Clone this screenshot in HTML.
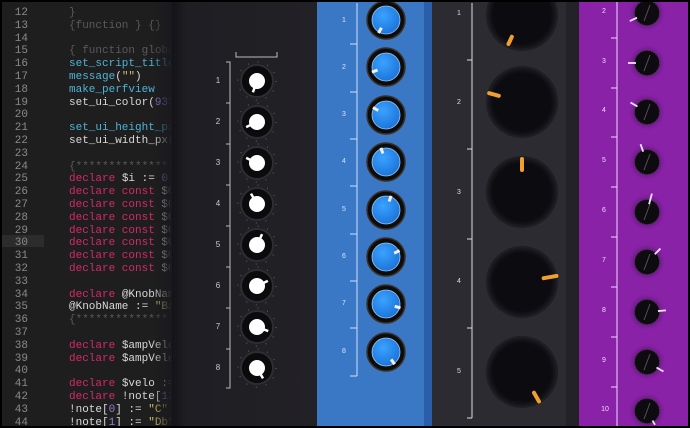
<!DOCTYPE html>
<html><head><meta charset="utf-8"><style>
html,body{margin:0;padding:0;background:#000;}
#w{position:relative;width:690px;height:428px;overflow:hidden;background:#000;}
#code{position:absolute;left:2px;top:2px;width:172px;height:424px;background:#1e1e1f;overflow:hidden;}
.ln{position:absolute;left:0;width:40px;font:11px/12.8px "Liberation Mono",monospace;color:#8a8a8a;}
.cl{position:absolute;left:67px;font:11px/12.8px "Liberation Mono",monospace;color:#d8d8d8;white-space:pre;}
.f{color:#4fb3d6}.k{color:#d6286a}.c{color:#5a5a5a}.n{color:#9b7ad8}.s{color:#d0c070}
#fade{position:absolute;left:150px;top:0;width:22px;height:424px;background:linear-gradient(to right,rgba(30,30,31,0),#1a191d 90%);}
svg{position:absolute;left:0;top:0;}
</style></head><body><div id="w">
<div id="code">
<div style="position:absolute;left:0;top:233px;width:42px;height:12px;background:#2c2c2e"></div>
<div class="ln" style="top:5px;text-align:right;width:26px">12<br>13<br>14<br>15<br>16<br>17<br>18<br>19<br>20<br>21<br>22<br>23<br>24<br>25<br>26<br>27<br>28<br>29<br>30<br>31<br>32<br>33<br>34<br>35<br>36<br>37<br>38<br>39<br>40<br>41<br>42<br>43<br>44</div>
<div class="cl" style="top:5px"><span class="c">}
{function } {}</span>

<span class="c">{ function globa</span>
<span class="f">set_script_title(</span>
<span class="f">message</span>(<span class="s">""</span>)
<span class="f">make_perfview</span>
set_ui_color(<span class="n">9333</span>

<span class="f">set_ui_height_px(</span>
set_ui_width_px(<span class="n">6</span>

<span class="c">{****************</span>
<span class="k">declare</span> $i := <span class="n">0</span>
<span class="k">declare const</span> $GU
<span class="k">declare const</span> $GU
<span class="k">declare const</span> $GU
<span class="k">declare const</span> $GU
<span class="k">declare const</span> $GU
<span class="k">declare const</span> $GU
<span class="k">declare const</span> $GU

<span class="k">declare</span> @KnobName
@KnobName := <span class="s">"Bas</span>
<span class="c">{****************</span>

<span class="k">declare</span> $ampVeloI
<span class="k">declare</span> $ampVeloO

<span class="k">declare</span> $velo :=
<span class="k">declare</span> !note[<span class="n">12</span>]
!note[<span class="n">0</span>] := <span class="s">"C"</span>
!note[<span class="n">1</span>] := <span class="s">"Db"</span></div>
<div id="fade"></div>
</div>
<svg width="690" height="428" viewBox="0 0 690 428" font-family="Liberation Sans, sans-serif">
<defs>
<radialGradient id="bl" cx="0.4" cy="0.35" r="0.7"><stop offset="0" stop-color="#3aa2ff"/><stop offset="1" stop-color="#1a72d8"/></radialGradient>
<radialGradient id="gk" cx="0.5" cy="0.5" r="0.5"><stop offset="0.85" stop-color="#0c0b0f"/><stop offset="1" stop-color="#1a191e"/></radialGradient>
<radialGradient id="pg" cx="0.5" cy="0.5" r="0.5"><stop offset="0.55" stop-color="#5e1676"/><stop offset="1" stop-color="#8a22a8" stop-opacity="0"/></radialGradient>
<linearGradient id="p1" x1="0" x2="1"><stop offset="0" stop-color="#141317"/><stop offset="0.1" stop-color="#1f1e23"/><stop offset="1" stop-color="#222126"/></linearGradient>
</defs>
<rect x="172" y="2" width="145" height="424" fill="url(#p1)"/>
<path d="M236 52 V57 H277 V52" stroke="#bbb" fill="none" stroke-width="1"/>
<path d="M226 62 H230 V388 H226" stroke="#bbb" fill="none"/>
<g stroke="#bbb"><line x1="226" y1="103" x2="230" y2="103"/><line x1="226" y1="144" x2="230" y2="144"/><line x1="226" y1="185" x2="230" y2="185"/><line x1="226" y1="226" x2="230" y2="226"/><line x1="226" y1="267" x2="230" y2="267"/><line x1="226" y1="308" x2="230" y2="308"/><line x1="226" y1="349" x2="230" y2="349"/></g>
<g fill="#ccc" font-size="8" text-anchor="middle"><text x="218" y="83">1</text><text x="218" y="124">2</text><text x="218" y="165">3</text><text x="218" y="206">4</text><text x="218" y="247">5</text><text x="218" y="288">6</text><text x="218" y="329">7</text><text x="218" y="370">8</text></g>
<g>
<g transform="translate(257,81)"><circle r="19" fill="none" stroke="#666" stroke-width="1" stroke-dasharray="1 9"/><circle r="16" fill="#0b0b0d" stroke="#2e2e32" stroke-width="2"/><circle r="8" fill="#fff"/><g transform="rotate(200)"><line y1="-5" y2="-12" stroke="#fff" stroke-width="2.5"/></g></g>
<g transform="translate(257,122)"><circle r="19" fill="none" stroke="#666" stroke-dasharray="1 9"/><circle r="16" fill="#0b0b0d" stroke="#2e2e32" stroke-width="2"/><circle r="8" fill="#fff"/><g transform="rotate(245)"><line y1="-5" y2="-12" stroke="#fff" stroke-width="2.5"/></g></g>
<g transform="translate(257,163)"><circle r="19" fill="none" stroke="#666" stroke-dasharray="1 9"/><circle r="16" fill="#0b0b0d" stroke="#2e2e32" stroke-width="2"/><circle r="8" fill="#fff"/><g transform="rotate(295)"><line y1="-5" y2="-12" stroke="#fff" stroke-width="2.5"/></g></g>
<g transform="translate(257,204)"><circle r="19" fill="none" stroke="#666" stroke-dasharray="1 9"/><circle r="16" fill="#0b0b0d" stroke="#2e2e32" stroke-width="2"/><circle r="8" fill="#fff"/><g transform="rotate(330)"><line y1="-5" y2="-12" stroke="#fff" stroke-width="2.5"/></g></g>
<g transform="translate(257,245)"><circle r="19" fill="none" stroke="#666" stroke-dasharray="1 9"/><circle r="16" fill="#0b0b0d" stroke="#2e2e32" stroke-width="2"/><circle r="8" fill="#fff"/><g transform="rotate(25)"><line y1="-5" y2="-12" stroke="#fff" stroke-width="2.5"/></g></g>
<g transform="translate(257,286)"><circle r="19" fill="none" stroke="#666" stroke-dasharray="1 9"/><circle r="16" fill="#0b0b0d" stroke="#2e2e32" stroke-width="2"/><circle r="8" fill="#fff"/><g transform="rotate(65)"><line y1="-5" y2="-12" stroke="#fff" stroke-width="2.5"/></g></g>
<g transform="translate(257,327)"><circle r="19" fill="none" stroke="#666" stroke-dasharray="1 9"/><circle r="16" fill="#0b0b0d" stroke="#2e2e32" stroke-width="2"/><circle r="8" fill="#fff"/><g transform="rotate(110)"><line y1="-5" y2="-12" stroke="#fff" stroke-width="2.5"/></g></g>
<g transform="translate(257,368)"><circle r="19" fill="none" stroke="#666" stroke-dasharray="1 9"/><circle r="16" fill="#0b0b0d" stroke="#2e2e32" stroke-width="2"/><circle r="8" fill="#fff"/><g transform="rotate(150)"><line y1="-5" y2="-12" stroke="#fff" stroke-width="2.5"/></g></g>
</g>
<rect x="317" y="2" width="115" height="424" fill="#3a78c6"/>
<rect x="424" y="2" width="8" height="424" fill="#2b5ea8"/>
<line x1="357" y1="3" x2="357" y2="376" stroke="#cfe0ff"/>
<g stroke="#cfe0ff"><line x1="350" y1="44" x2="357" y2="44"/><line x1="350" y1="92" x2="357" y2="92"/><line x1="350" y1="139" x2="357" y2="139"/><line x1="350" y1="186" x2="357" y2="186"/><line x1="350" y1="234" x2="357" y2="234"/><line x1="350" y1="281" x2="357" y2="281"/><line x1="350" y1="328" x2="357" y2="328"/><line x1="350" y1="376" x2="357" y2="376"/></g>
<g fill="#d6e4ff" font-size="7" text-anchor="middle"><text x="344" y="22">1</text><text x="344" y="69">2</text><text x="344" y="116">3</text><text x="344" y="163">4</text><text x="344" y="211">5</text><text x="344" y="258">6</text><text x="344" y="305">7</text><text x="344" y="353">8</text></g>
<g>
<g transform="translate(386,20)"><circle r="19" fill="#0d0c0c" stroke="#3b3026" stroke-width="1.5"/><circle r="14" fill="url(#bl)" stroke="#9cc6f0" stroke-width="0.8"/><g transform="rotate(210)"><line y1="-9" y2="-15" stroke="#f2f2f2" stroke-width="3"/></g></g>
<g transform="translate(386,67)"><circle r="19" fill="#0d0c0c" stroke="#3b3026" stroke-width="1.5"/><circle r="14" fill="url(#bl)" stroke="#9cc6f0" stroke-width="0.8"/><g transform="rotate(250)"><line y1="-9" y2="-15" stroke="#f2f2f2" stroke-width="3"/></g></g>
<g transform="translate(386,115)"><circle r="19" fill="#0d0c0c" stroke="#3b3026" stroke-width="1.5"/><circle r="14" fill="url(#bl)" stroke="#9cc6f0" stroke-width="0.8"/><g transform="rotate(300)"><line y1="-9" y2="-15" stroke="#f2f2f2" stroke-width="3"/></g></g>
<g transform="translate(386,162)"><circle r="19" fill="#0d0c0c" stroke="#3b3026" stroke-width="1.5"/><circle r="14" fill="url(#bl)" stroke="#9cc6f0" stroke-width="0.8"/><g transform="rotate(340)"><line y1="-9" y2="-15" stroke="#f2f2f2" stroke-width="3"/></g></g>
<g transform="translate(386,210)"><circle r="19" fill="#0d0c0c" stroke="#3b3026" stroke-width="1.5"/><circle r="14" fill="url(#bl)" stroke="#9cc6f0" stroke-width="0.8"/><g transform="rotate(20)"><line y1="-9" y2="-15" stroke="#f2f2f2" stroke-width="3"/></g></g>
<g transform="translate(386,257)"><circle r="19" fill="#0d0c0c" stroke="#3b3026" stroke-width="1.5"/><circle r="14" fill="url(#bl)" stroke="#9cc6f0" stroke-width="0.8"/><g transform="rotate(65)"><line y1="-9" y2="-15" stroke="#f2f2f2" stroke-width="3"/></g></g>
<g transform="translate(386,304)"><circle r="19" fill="#0d0c0c" stroke="#3b3026" stroke-width="1.5"/><circle r="14" fill="url(#bl)" stroke="#9cc6f0" stroke-width="0.8"/><g transform="rotate(105)"><line y1="-9" y2="-15" stroke="#f2f2f2" stroke-width="3"/></g></g>
<g transform="translate(386,352)"><circle r="19" fill="#0d0c0c" stroke="#3b3026" stroke-width="1.5"/><circle r="14" fill="url(#bl)" stroke="#9cc6f0" stroke-width="0.8"/><g transform="rotate(145)"><line y1="-9" y2="-15" stroke="#f2f2f2" stroke-width="3"/></g></g>
</g>
<rect x="432" y="2" width="147" height="424" fill="#2c2b32"/>
<rect x="566" y="2" width="13" height="424" fill="#232228"/>
<line x1="472" y1="3" x2="472" y2="418" stroke="#ddd"/>
<g stroke="#ddd"><line x1="467" y1="60" x2="472" y2="60"/><line x1="467" y1="149" x2="472" y2="149"/><line x1="467" y1="239" x2="472" y2="239"/><line x1="467" y1="328" x2="472" y2="328"/><line x1="467" y1="418" x2="472" y2="418"/></g>
<g fill="#ddd" font-size="7" text-anchor="middle"><text x="459" y="15">1</text><text x="459" y="104">2</text><text x="459" y="194">3</text><text x="459" y="283">4</text><text x="459" y="373">5</text></g>
<g>
<g transform="translate(522,15)"><circle r="36" fill="#1e1d22"/><circle r="34" fill="url(#gk)"/><g transform="rotate(205)"><line y1="-24" y2="-32" stroke="#f0a030" stroke-width="4" stroke-linecap="round"/></g></g>
<g transform="translate(522,102)"><circle r="36" fill="#1e1d22"/><circle r="34" fill="url(#gk)"/><g transform="rotate(285)"><line y1="-24" y2="-34" stroke="#f0a030" stroke-width="4" stroke-linecap="round"/></g></g>
<g transform="translate(522,192)"><circle r="36" fill="#1e1d22"/><circle r="34" fill="url(#gk)"/><g transform="rotate(0)"><line y1="-22" y2="-33" stroke="#f0a030" stroke-width="4" stroke-linecap="round"/></g></g>
<g transform="translate(522,282)"><circle r="36" fill="#1e1d22"/><circle r="34" fill="url(#gk)"/><g transform="rotate(80)"><line y1="-22" y2="-35" stroke="#f0a030" stroke-width="4" stroke-linecap="round"/></g></g>
<g transform="translate(522,372)"><circle r="36" fill="#1e1d22"/><circle r="34" fill="url(#gk)"/><g transform="rotate(150)"><line y1="-24" y2="-34" stroke="#f0a030" stroke-width="4" stroke-linecap="round"/></g></g>
</g>
<rect x="579" y="2" width="109" height="424" fill="#8a22a8"/>
<line x1="617" y1="2" x2="617" y2="426" stroke="#f0d8ff"/>
<g stroke="#f0d8ff"><line x1="611" y1="38" x2="617" y2="38"/><line x1="611" y1="88" x2="617" y2="88"/><line x1="611" y1="137" x2="617" y2="137"/><line x1="611" y1="187" x2="617" y2="187"/><line x1="611" y1="237" x2="617" y2="237"/><line x1="611" y1="287" x2="617" y2="287"/><line x1="611" y1="337" x2="617" y2="337"/><line x1="611" y1="387" x2="617" y2="387"/></g>
<g fill="#f0d8ff" font-size="7" text-anchor="middle"><text x="604" y="13">2</text><text x="604" y="63">3</text><text x="604" y="112">4</text><text x="604" y="162">5</text><text x="604" y="212">6</text><text x="604" y="262">7</text><text x="604" y="312">8</text><text x="604" y="362">9</text><text x="605" y="411">10</text></g>
<g>
<g transform="translate(647,13)"><circle r="20" fill="url(#pg)"/><circle r="12.5" fill="#0d0b10" stroke="#444" stroke-dasharray="1 1.5"/><line x1="-3" y1="8" x2="3" y2="-8" stroke="#555" stroke-width="1"/><g transform="rotate(245)"><line y1="-11" y2="-19" stroke="#f0e0ff" stroke-width="1.8"/></g></g>
<g transform="translate(647,63)"><circle r="20" fill="url(#pg)"/><circle r="12.5" fill="#0d0b10" stroke="#444" stroke-dasharray="1 1.5"/><line x1="-3" y1="8" x2="3" y2="-8" stroke="#555" stroke-width="1"/><g transform="rotate(270)"><line y1="-11" y2="-19" stroke="#f0e0ff" stroke-width="1.8"/></g></g>
<g transform="translate(647,112)"><circle r="20" fill="url(#pg)"/><circle r="12.5" fill="#0d0b10" stroke="#444" stroke-dasharray="1 1.5"/><line x1="-3" y1="8" x2="3" y2="-8" stroke="#555" stroke-width="1"/><g transform="rotate(300)"><line y1="-11" y2="-19" stroke="#f0e0ff" stroke-width="1.8"/></g></g>
<g transform="translate(647,162)"><circle r="20" fill="url(#pg)"/><circle r="12.5" fill="#0d0b10" stroke="#444" stroke-dasharray="1 1.5"/><line x1="-3" y1="8" x2="3" y2="-8" stroke="#555" stroke-width="1"/><g transform="rotate(340)"><line y1="-11" y2="-19" stroke="#f0e0ff" stroke-width="1.8"/></g></g>
<g transform="translate(647,212)"><circle r="20" fill="url(#pg)"/><circle r="12.5" fill="#0d0b10" stroke="#444" stroke-dasharray="1 1.5"/><line x1="-3" y1="8" x2="3" y2="-8" stroke="#555" stroke-width="1"/><g transform="rotate(15)"><line y1="-8" y2="-19" stroke="#f0e0ff" stroke-width="1.8"/></g></g>
<g transform="translate(647,262)"><circle r="20" fill="url(#pg)"/><circle r="12.5" fill="#0d0b10" stroke="#444" stroke-dasharray="1 1.5"/><line x1="-3" y1="8" x2="3" y2="-8" stroke="#555" stroke-width="1"/><g transform="rotate(45)"><line y1="-11" y2="-19" stroke="#f0e0ff" stroke-width="1.8"/></g></g>
<g transform="translate(647,312)"><circle r="20" fill="url(#pg)"/><circle r="12.5" fill="#0d0b10" stroke="#444" stroke-dasharray="1 1.5"/><line x1="-3" y1="8" x2="3" y2="-8" stroke="#555" stroke-width="1"/><g transform="rotate(85)"><line y1="-11" y2="-19" stroke="#f0e0ff" stroke-width="1.8"/></g></g>
<g transform="translate(647,362)"><circle r="20" fill="url(#pg)"/><circle r="12.5" fill="#0d0b10" stroke="#444" stroke-dasharray="1 1.5"/><line x1="-3" y1="8" x2="3" y2="-8" stroke="#555" stroke-width="1"/><g transform="rotate(120)"><line y1="-11" y2="-19" stroke="#f0e0ff" stroke-width="1.8"/></g></g>
<g transform="translate(647,411)"><circle r="20" fill="url(#pg)"/><circle r="12.5" fill="#0d0b10" stroke="#444" stroke-dasharray="1 1.5"/><line x1="-3" y1="8" x2="3" y2="-8" stroke="#555" stroke-width="1"/><g transform="rotate(150)"><line y1="-11" y2="-16" stroke="#f0e0ff" stroke-width="1.8"/></g></g>
</g>
<rect x="0" y="0" width="690" height="428" fill="none" stroke="#000" stroke-width="4"/>
</svg>
</div></body></html>
